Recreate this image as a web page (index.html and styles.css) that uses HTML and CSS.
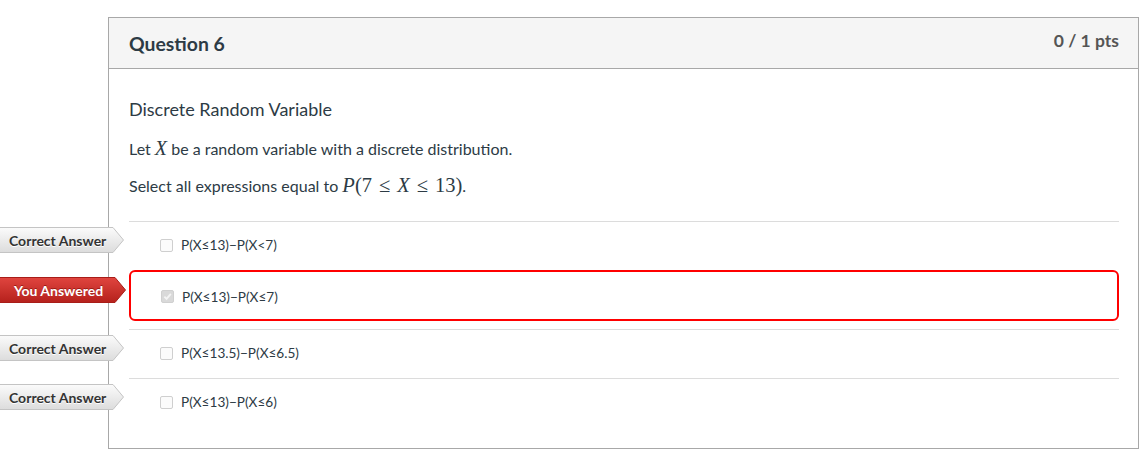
FILE: index.html
```html
<!DOCTYPE html>
<html>
<head>
<meta charset="utf-8">
<link rel="stylesheet" href="styles.css">
</head>
<body>
<div class="card">
  <div class="header">
    <span class="title">Question 6</span>
    <span class="pts">0 / 1 pts</span>
  </div>
  <div class="body">
    <p class="qtitle">Discrete Random Variable</p>
    <p class="qline first">Let <span class="mi">X</span> be a random variable with a discrete distribution.</p>
    <p class="qline second">Select all expressions equal to <span class="math"><span class="mi">P</span>(7<span class="rel">≤</span><span class="mi">X</span><span class="rel">≤</span>13)</span>.</p>
    <div class="answers">
      <div class="answer">
        <span class="badge correct"><svg class="shape" viewBox="0 0 124 26" preserveAspectRatio="none"><defs><linearGradient id="g1" x1="0" y1="0" x2="0" y2="1"><stop offset="0" stop-color="#fbfbfb"/><stop offset="1" stop-color="#dcdcdc"/></linearGradient></defs><polygon points="-1,0.5 113,0.5 123.5,13 113,25.5 -1,25.5" fill="url(#g1)" stroke="#c4c4c4" stroke-width="1"/></svg><span class="btext">Correct Answer</span></span>
        <span class="cb"></span><span class="atext">P(X≤13)−P(X&lt;7)</span>
      </div>
      <div class="answer wrong">
        <span class="badge youans"><svg class="shape" viewBox="0 0 126 26" preserveAspectRatio="none"><defs><linearGradient id="g2" x1="0" y1="0" x2="0" y2="1"><stop offset="0" stop-color="#e0453f"/><stop offset="1" stop-color="#b5211c"/></linearGradient></defs><polygon points="-1,0.5 115,0.5 125.5,13 115,25.5 -1,25.5" fill="url(#g2)" stroke="#a81d18" stroke-width="1"/></svg><span class="btext">You Answered</span></span>
        <span class="cb checked"><svg viewBox="0 0 12 12"><path d="M2.6 6.2 L5 8.6 L9.6 3.2" fill="none" stroke="#f4f4f4" stroke-width="2"/></svg></span><span class="atext">P(X≤13)−P(X≤7)</span>
      </div>
      <div class="answer">
        <span class="badge correct"><svg class="shape" viewBox="0 0 124 26" preserveAspectRatio="none"><polygon points="-1,0.5 113,0.5 123.5,13 113,25.5 -1,25.5" fill="url(#g1)" stroke="#c4c4c4" stroke-width="1"/></svg><span class="btext">Correct Answer</span></span>
        <span class="cb"></span><span class="atext">P(X≤13.5)−P(X≤6.5)</span>
      </div>
      <div class="answer">
        <span class="badge correct"><svg class="shape" viewBox="0 0 124 26" preserveAspectRatio="none"><polygon points="-1,0.5 113,0.5 123.5,13 113,25.5 -1,25.5" fill="url(#g1)" stroke="#c4c4c4" stroke-width="1"/></svg><span class="btext">Correct Answer</span></span>
        <span class="cb"></span><span class="atext">P(X≤13)−P(X≤6)</span>
      </div>
    </div>
  </div>
</div>
</body>
</html>
```
FILE: styles.css
```css
* { box-sizing: border-box; }
html, body { margin: 0; padding: 0; background: #fff; }
body {
  font-family: Lato, "Noto Sans", sans-serif;
  color: #2d3b45;
}
.card {
  margin: 17px 0 0 108px;
  width: 1031px;
  border: 1px solid #a8a8a8;
}
.header {
  height: 51px;
  background: #f5f5f5;
  border-bottom: 1px solid #a8a8a8;
  display: flex;
  justify-content: space-between;
  align-items: flex-start;
  padding: 0 19px 0 20px;
}
.title {
  font-size: 19.4px;
  font-weight: 700;
  line-height: 24px;
  margin-top: 14px;
}
.pts {
  font-size: 17.5px;
  font-weight: 700;
  color: #555;
  line-height: 24px;
  margin-top: 11px;
}
.body {
  padding: 0 19px 21px 20px;
}
.qtitle {
  margin: 28px 0 0;
  font-size: 18px;
  line-height: 24px;
}
.qline {
  margin: 16px 0 0;
  font-size: 16px;
  line-height: 22px;
}
.qline.second { margin-top: 14px; }
.mi {
  font-family: "Liberation Serif", "DejaVu Serif", serif;
  font-style: italic;
  font-size: 20px;
}
.math {
  font-family: "Liberation Serif", "DejaVu Serif", serif;
  font-size: 20.5px;
}
.math .mi { font-size: 20.5px; }
.rel { margin: 0 7px; }
.answers { margin-top: 24px; }
.answer {
  position: relative;
  height: 49px;
  border-top: 1px solid #dcdcdc;
  display: flex;
  align-items: center;
  padding-left: 31px;
  padding-bottom: 2px;
}
.answer.wrong {
  height: 51px;
  border: 2px solid #f00;
  border-radius: 6px;
  padding-left: 31px;
  padding-top: 2px;
  padding-bottom: 0;
}
.answer.wrong + .answer { margin-top: 8px; }
.cb {
  width: 13px;
  height: 13px;
  border: 1px solid #cfcfcf;
  border-radius: 2px;
  background: #fbfbfb;
  flex: none;
  display: flex;
}
.cb.checked {
  background: #d9d9d9;
  border-color: #d0d0d0;
  margin-left: -1px;
}
.cb svg { width: 11px; height: 11px; }
.atext {
  margin-left: 8px;
  font-size: 13.6px;
}
.badge {
  position: absolute;
  left: -129px;
  top: 5px;
  width: 124px;
  height: 26px;
  display: flex;
  align-items: center;
}
.answer.wrong .badge { left: -131px; top: 5px; width: 126px; }
.shape {
  position: absolute;
  left: 0; top: 0;
  width: 100%; height: 100%;
}
.btext {
  position: relative;
  font-size: 14px;
  font-weight: 700;
  padding-left: 9px;
  color: #333;
  text-shadow: 0 1px 0 #fff;
}
.youans .btext {
  color: #fff;
  text-shadow: 0 -1px 0 #9b1a16;
  padding-left: 14px;
}
```
